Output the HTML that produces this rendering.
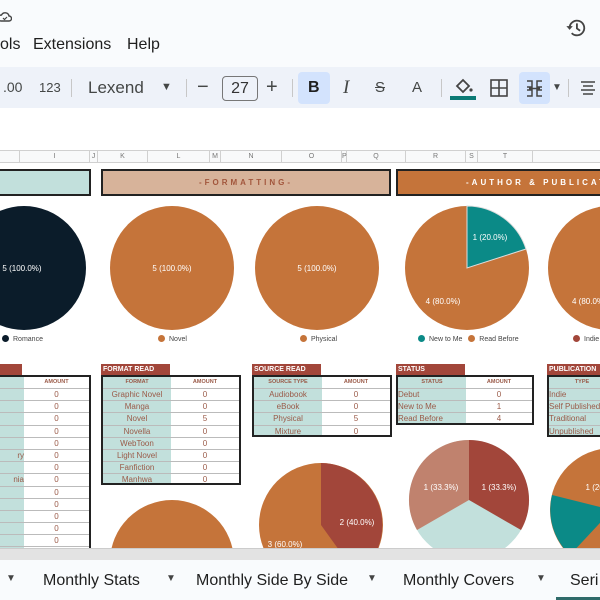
<!DOCTYPE html>
<html><head><meta charset="utf-8"><style>
*{margin:0;padding:0;box-sizing:border-box}
body{width:600px;height:600px;overflow:hidden;position:relative;background:#fff;font-family:"Liberation Sans",sans-serif}
.a{position:absolute}
.menu{font-size:16px;color:#1f1f1f;top:36px}
.tb{top:67px;left:0;width:600px;height:41px;background:#eef2f9}
.ti{position:absolute;top:0;height:41px;line-height:41px;color:#444746;font-size:16px}
.sep{position:absolute;top:12px;width:1px;height:18px;background:#c7c7c7}
.ch{top:150px;left:0;width:600px;height:13px;background:#f8f9fa;border-top:1px solid #d0d0d0;border-bottom:1px solid #d0d0d0}
.cl{position:absolute;top:0;height:11px;border-right:1px solid #d0d0d0;font-size:7px;color:#777;text-align:center;line-height:11px}
.ban{top:169px;height:27px;border:2px solid #222;font-size:8px;letter-spacing:3px;font-weight:bold;text-align:center;line-height:23px;white-space:nowrap;overflow:hidden}
.tab{height:11px;background:#a2463a;color:#fff;font-size:7px;font-weight:bold;line-height:11px;padding-left:2px;white-space:nowrap;overflow:hidden}
.tbl{border:2px solid #222;background:#fff;overflow:hidden}
.tbl table{border-collapse:collapse;width:100%;font-size:8px;color:#9a5a48}
.tbl td{height:12.2px;border-bottom:1px solid #bbb;text-align:center;padding:0;line-height:11px}
.tbl td.k{background:#c2e0dc}
.tbl tr.h td{font-size:5.5px;font-weight:bold;height:11px}
.leg{font-size:7px;color:#444;top:335px}
.dot{display:inline-block;width:7px;height:7px;border-radius:50%;vertical-align:-1px;margin-right:4px}
.bt{top:560px;left:0;width:600px;height:40px;background:#f9fbfd;font-size:16px;color:#1f1f1f}
</style></head><body>
<div class="a" style="left:0;top:0;width:600px;height:67px;background:#f9fbfd"></div>
<svg class="a" style="left:-2px;top:10px" width="14" height="14" viewBox="0 0 14 14"><path d="M3 11h8a2.5 2.5 0 0 0 0-5 4 4 0 0 0-7.5-1A3 3 0 0 0 3 11z" fill="none" stroke="#444" stroke-width="1.4"/><path d="M5 8l1.5 1.5L9 7" fill="none" stroke="#444" stroke-width="1.2"/></svg>
<div class="a menu" style="left:0">ols</div>
<div class="a menu" style="left:33px">Extensions</div>
<div class="a menu" style="left:127px">Help</div>
<svg class="a" style="left:565px;top:17px" width="22" height="22" viewBox="0 0 24 24"><path d="M5 12a8 8 0 1 1 2.3 5.6" fill="none" stroke="#444" stroke-width="2"/><path d="M1.5 10l3.5 4 3.5-4z" fill="#444"/><path d="M13 7v5.5l3.5 2.5" fill="none" stroke="#444" stroke-width="2"/></svg>
<div class="a tb">
 <div class="ti" style="left:3px;font-size:14px">.00</div>
 <div class="ti" style="left:39px;font-size:13px">123</div>
 <div class="sep" style="left:71px"></div>
 <div class="ti" style="left:88px;font-size:17px">Lexend</div>
 <div class="ti" style="left:161px;font-size:11px">▼</div>
 <div class="sep" style="left:186px"></div>
 <div class="ti" style="left:197px;font-size:20px">−</div>
 <div class="a" style="left:222px;top:9px;width:36px;height:25px;border:1px solid #777;border-radius:4px;font-size:16px;text-align:center;line-height:23px;color:#333">27</div>
 <div class="ti" style="left:266px;font-size:20px">+</div>
 <div class="sep" style="left:292px"></div>
 <div class="a" style="left:298px;top:5px;width:32px;height:32px;background:#d3e3fd;border-radius:4px"></div>
 <div class="ti" style="left:308px;font-weight:bold;color:#1f1f1f">B</div>
 <div class="ti" style="left:343px;font-style:italic;font-family:'Liberation Serif',serif;font-size:19px">I</div>
 <div class="ti" style="left:375px;text-decoration:line-through;font-size:15px">S</div>
 <div class="ti" style="left:412px;font-size:15px">A</div>
 <div class="sep" style="left:441px"></div>
 <svg class="a" style="left:450px;top:8px" width="26" height="26" viewBox="0 0 26 26"><path d="M7 11l6-6 6 6-6 6z" fill="none" stroke="#444" stroke-width="1.8"/><circle cx="21" cy="15" r="1.6" fill="#444"/><rect x="0" y="21" width="26" height="4" fill="#0b7a75"/></svg>
 <svg class="a" style="left:490px;top:12px" width="18" height="18" viewBox="0 0 18 18"><rect x="1" y="1" width="16" height="16" fill="none" stroke="#444" stroke-width="1.6"/><path d="M9 1v16M1 9h16" stroke="#444" stroke-width="1.6"/></svg>
 <div class="a" style="left:519px;top:5px;width:31px;height:32px;background:#d3e3fd;border-radius:4px"></div>
 <svg class="a" style="left:525px;top:12px" width="19" height="19" viewBox="0 0 19 19"><path d="M2 2h5v6H2M17 2h-5v6h5M2 11h5v6H2M17 11h-5v6h5M4 9.5h11" fill="none" stroke="#444" stroke-width="1.5"/></svg>
 <div class="ti" style="left:552px;font-size:10px">▼</div>
 <div class="sep" style="left:568px"></div>
 <svg class="a" style="left:580px;top:13px" width="16" height="16" viewBox="0 0 16 16"><path d="M1 2h14M3 6h10M1 10h14M3 14h10" stroke="#444" stroke-width="1.6"/></svg>
</div>
<div class="a ch">
 <div class="cl" style="left:0;width:20px"></div>
 <div class="cl" style="left:20px;width:70px">I</div>
 <div class="cl" style="left:90px;width:8px">J</div>
 <div class="cl" style="left:98px;width:50px">K</div>
 <div class="cl" style="left:148px;width:62px">L</div>
 <div class="cl" style="left:210px;width:11px">M</div>
 <div class="cl" style="left:221px;width:61px">N</div>
 <div class="cl" style="left:282px;width:60px">O</div>
 <div class="cl" style="left:342px;width:5px">P</div>
 <div class="cl" style="left:347px;width:59px">Q</div>
 <div class="cl" style="left:406px;width:60px">R</div>
 <div class="cl" style="left:466px;width:12px">S</div>
 <div class="cl" style="left:478px;width:55px">T</div>
</div>
<div class="a ban" style="left:-3px;width:94px;background:#c2e0dc"></div>
<div class="a ban" style="left:101px;width:290px;background:#d7b39a;color:#a2563c">-FORMATTING-</div>
<div class="a ban" style="left:396px;width:210px;background:#c5743a;color:#fff;text-align:left;padding-left:68px">-AUTHOR &amp; PUBLICATIO</div>

<svg class="a" style="left:0;top:196px" width="600" height="164">
 <g font-family="Liberation Sans" font-size="8" fill="#fff" text-anchor="middle">
 <circle cx="24" cy="72" r="62" fill="#0b1c2a"/><text x="22" y="75">5 (100.0%)</text>
 <circle cx="172" cy="72" r="62" fill="#c5743a"/><text x="172" y="75">5 (100.0%)</text>
 <circle cx="317" cy="72" r="62" fill="#c5743a"/><text x="317" y="75">5 (100.0%)</text>
 <circle cx="467" cy="72" r="62" fill="#c5743a"/>
 <path d="M467 72V10A62 62 0 0 1 526 53Z" fill="#0b8a87" stroke="#ddd" stroke-width="1"/>
 <text x="490" y="44">1 (20.0%)</text><text x="443" y="108">4 (80.0%)</text>
 <circle cx="610" cy="72" r="62" fill="#c5743a"/><text x="588" y="108">4 (80.0%</text>
 </g>
</svg>
<div class="a leg" style="left:2px"><span class="dot" style="background:#0b1c2a"></span>Romance</div>
<div class="a leg" style="left:158px"><span class="dot" style="background:#c5743a"></span>Novel</div>
<div class="a leg" style="left:300px"><span class="dot" style="background:#c5743a"></span>Physical</div>
<div class="a leg" style="left:418px"><span class="dot" style="background:#0b8a87"></span>New to Me &nbsp;&nbsp;<span class="dot" style="background:#c5743a"></span>Read Before</div>
<div class="a leg" style="left:573px"><span class="dot" style="background:#a2463a"></span>Indie</div>

<svg class="a" style="left:0;top:420px" width="600" height="128">
 <g font-family="Liberation Sans" font-size="8" fill="#fff" text-anchor="middle">
 <circle cx="172" cy="142" r="62" fill="#c5743a"/>
 <circle cx="321" cy="105" r="62" fill="#c5743a"/>
 <path d="M321 105V43A62 62 0 0 1 357 155Z" fill="#a2463a"/>
 <text x="357" y="105">2 (40.0%)</text><text x="285" y="127">3 (60.0%)</text>
 <circle cx="469" cy="80" r="60" fill="#c2e0dc"/>
 <path d="M469 80V20A60 60 0 0 1 521 110Z" fill="#a2463a"/>
 <path d="M469 80V20A60 60 0 0 0 417 110Z" fill="#c0826e"/>
 <text x="441" y="70">1 (33.3%)</text><text x="499" y="70">1 (33.3%)</text>
 <circle cx="612" cy="90" r="62" fill="#c5743a"/>
 <path d="M612 90L552 75A62 62 0 0 0 570 135Z" fill="#0b8a87"/>
 <text x="598" y="70">1 (20.0</text>
 </g>
</svg>

<div class="a tab" style="left:0;top:364px;width:22px"></div>
<div class="a tbl" style="left:-3px;top:375px;width:94px;height:180px"><table>
<tr class="h"><td class="k" style="width:25px"></td><td>AMOUNT</td></tr>
<tr><td class="k"></td><td>0</td></tr><tr><td class="k"></td><td>0</td></tr><tr><td class="k"></td><td>0</td></tr><tr><td class="k"></td><td>0</td></tr><tr><td class="k"></td><td>0</td></tr><tr><td class="k" style="text-align:right">ry</td><td>0</td></tr><tr><td class="k"></td><td>0</td></tr><tr><td class="k" style="text-align:right">nia</td><td>0</td></tr><tr><td class="k"></td><td>0</td></tr><tr><td class="k"></td><td>0</td></tr><tr><td class="k"></td><td>0</td></tr><tr><td class="k"></td><td>0</td></tr><tr><td class="k"></td><td>0</td></tr><tr><td class="k"></td><td>0</td></tr></table></div>

<div class="a tab" style="left:101px;top:364px;width:69px">FORMAT READ</div>
<div class="a tbl" style="left:101px;top:375px;width:140px;height:110px"><table>
<tr class="h"><td class="k" style="width:68px">FORMAT</td><td>AMOUNT</td></tr>
<tr><td class="k">Graphic Novel</td><td>0</td></tr><tr><td class="k">Manga</td><td>0</td></tr><tr><td class="k">Novel</td><td>5</td></tr><tr><td class="k">Novella</td><td>0</td></tr><tr><td class="k">WebToon</td><td>0</td></tr><tr><td class="k">Light Novel</td><td>0</td></tr><tr><td class="k">Fanfiction</td><td>0</td></tr><tr><td class="k">Manhwa</td><td>0</td></tr></table></div>

<div class="a tab" style="left:252px;top:364px;width:69px">SOURCE READ</div>
<div class="a tbl" style="left:252px;top:375px;width:140px;height:62px"><table>
<tr class="h"><td class="k" style="width:68px">SOURCE TYPE</td><td>AMOUNT</td></tr>
<tr><td class="k">Audiobook</td><td>0</td></tr><tr><td class="k">eBook</td><td>0</td></tr><tr><td class="k">Physical</td><td>5</td></tr><tr><td class="k">Mixture</td><td>0</td></tr></table></div>

<div class="a tab" style="left:396px;top:364px;width:69px">STATUS</div>
<div class="a tbl" style="left:396px;top:375px;width:138px;height:50px"><table>
<tr class="h"><td class="k" style="width:68px">STATUS</td><td>AMOUNT</td></tr>
<tr><td class="k" style="text-align:left">Debut</td><td>0</td></tr><tr><td class="k" style="text-align:left">New to Me</td><td>1</td></tr><tr><td class="k" style="text-align:left">Read Before</td><td>4</td></tr></table></div>

<div class="a tab" style="left:547px;top:364px;width:60px">PUBLICATION</div>
<div class="a tbl" style="left:547px;top:375px;width:70px;height:62px"><table>
<tr class="h"><td class="k">TYPE</td></tr>
<tr><td class="k" style="text-align:left">Indie</td></tr><tr><td class="k" style="text-align:left;white-space:nowrap">Self Published</td></tr><tr><td class="k" style="text-align:left">Traditional</td></tr><tr><td class="k" style="text-align:left">Unpublished</td></tr></table></div>

<div class="a" style="left:0;top:548px;width:600px;height:12px;background:#e3e3e3;border-top:1px solid #ccc"></div>
<div class="a bt">
 <div class="a" style="left:6px;top:13px;font-size:10px;color:#444">▼</div>
 <div class="a" style="left:43px;top:12px">Monthly Stats</div>
 <div class="a" style="left:166px;top:13px;font-size:10px;color:#444">▼</div>
 <div class="a" style="left:196px;top:12px">Monthly Side By Side</div>
 <div class="a" style="left:367px;top:13px;font-size:10px;color:#444">▼</div>
 <div class="a" style="left:403px;top:12px">Monthly Covers</div>
 <div class="a" style="left:536px;top:13px;font-size:10px;color:#444">▼</div>
 <div class="a" style="left:570px;top:12px">Seri</div>
 <div class="a" style="left:556px;top:37px;width:44px;height:3px;background:#2f6b6a"></div>
</div>
</body></html>
